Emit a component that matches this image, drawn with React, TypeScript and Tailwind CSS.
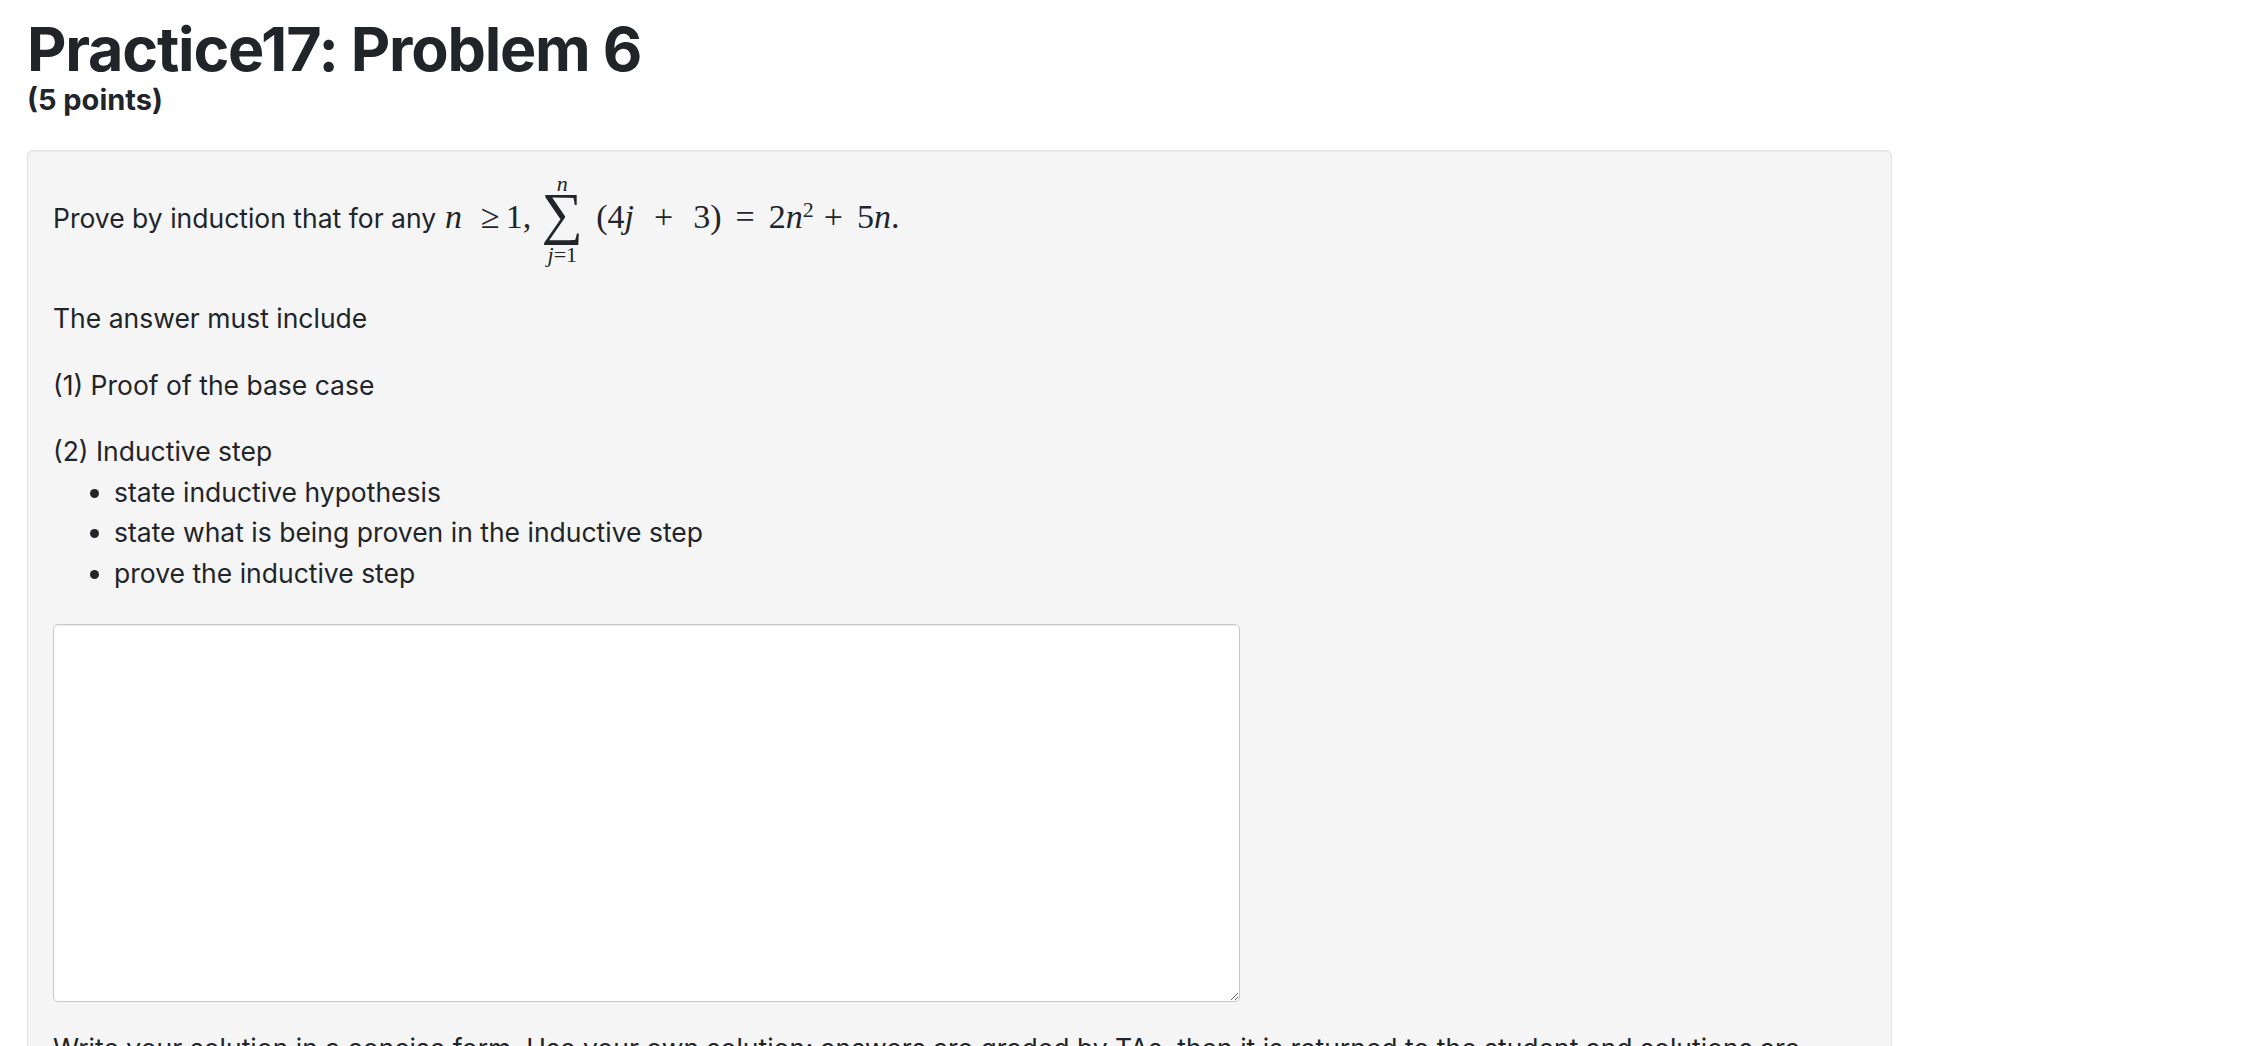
import React from "react";

const math = "font-['Liberation_Serif','DejaVu_Serif',serif]";

function SumFormula() {
  return (
    <>
      <span className={`${math} italic text-[34px] leading-none ml-[9px]`}>n</span>
      <span className={`${math} text-[34px] leading-none ml-[19px]`}>≥</span>
      <span className={`${math} text-[34px] leading-none ml-[6px]`}>1,</span>
      <span className={`${math} self-start -mt-[24px] ml-[12px] w-[38px] flex flex-col items-center leading-none`}>
        <span className="h-[20px] flex items-center italic text-[22px]">n</span>
        <span className="h-[52px] flex items-center justify-center text-[58px] leading-[40px]">
          <span className="relative -top-[6px]">∑</span>
        </span>
        <span className="h-[18px] flex items-center text-[22px]">
          <span className="italic">j</span>=1
        </span>
      </span>
      <span className={`${math} text-[34px] leading-none ml-[15px]`}>
        (4<span className="italic">j</span>
        <span className="mx-[20px]">+</span>3)
      </span>
      <span className={`${math} text-[34px] leading-none ml-[14px]`}>=</span>
      <span className={`${math} text-[34px] leading-none ml-[14px]`}>
        2<span className="italic">n</span>
        <sup className="text-[22px]">2</sup>
      </span>
      <span className={`${math} text-[34px] leading-none ml-[10px]`}>+</span>
      <span className={`${math} text-[34px] leading-none ml-[14px]`}>
        5<span className="italic">n</span>.
      </span>
    </>
  );
}

export default function App() {
  return (
    <div className="min-h-screen bg-white font-['Inter','Liberation_Sans',sans-serif] text-[#212529] pl-[27px]">
      <h1 className="pt-[19px] text-[61px] leading-[61px] font-bold tracking-[-0.02em]">
        Practice17: Problem 6
      </h1>
      <div className="mt-[2px] text-[29px] leading-[36px] font-bold">(5 points)</div>

      <div className="mt-[32px] w-[1865px] bg-[#f5f5f5] border border-[#e3e3e3] rounded-[6px] shadow-[inset_0_1px_1px_rgba(0,0,0,0.05)] px-[25px] pt-[25px] pb-[40px] text-[26.5px] leading-[40.5px]">
        <div className="flex items-baseline h-[96px] pt-[22px] mb-[26px]">
          <span>Prove by induction that for any</span>
          <SumFormula />
        </div>

        <p className="mb-[26px]">The answer must include</p>
        <p className="mb-[26px]">(1) Proof of the base case</p>
        <p>(2) Inductive step</p>
        <ul className="list-disc pl-[61px] mb-[31px]">
          <li>state inductive hypothesis</li>
          <li>state what is being proven in the inductive step</li>
          <li>prove the inductive step</li>
        </ul>

        <textarea className="block w-[1187px] h-[378px] bg-white border-[1.5px] border-[#c8c8c8] rounded-[5px] shadow-[inset_0_1px_1px_rgba(0,0,0,0.075)] outline-none" />

        <p className="mt-[26px]">
          Write your solution in a concise form. Use your own solution; answers are graded by TAs, then it is returned to the student and solutions are posted after the deadline.
        </p>
      </div>
    </div>
  );
}
